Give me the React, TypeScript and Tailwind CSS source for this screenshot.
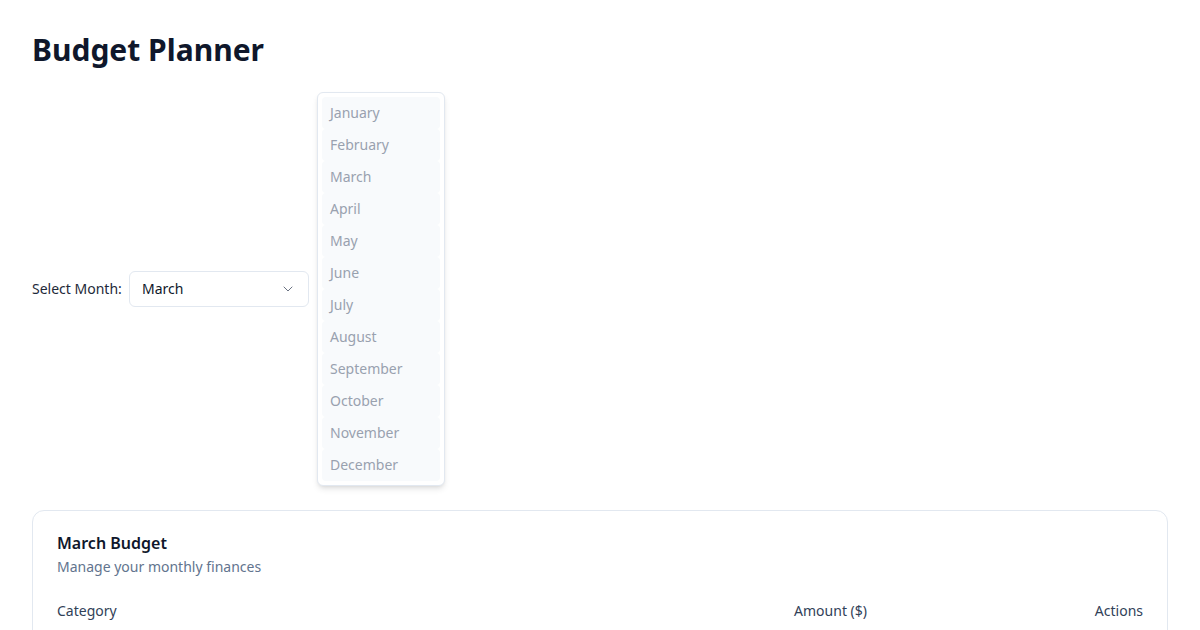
import { ChevronDown } from "lucide-react";

const MONTHS = [
  "January",
  "February",
  "March",
  "April",
  "May",
  "June",
  "July",
  "August",
  "September",
  "October",
  "November",
  "December",
];

export default function App() {
  const month = "March";

  return (
    <div
      className="min-h-screen bg-white p-8 text-slate-900"
      style={{ fontFamily: '"Noto Sans", "Open Sans", sans-serif' }}
    >
      <h1 className="mb-6 text-3xl font-bold leading-9 text-slate-900">Budget Planner</h1>

      {/* month picker — list is shown open beside the trigger */}
      <div className="flex items-center gap-2">
        <span className="w-[89px] shrink-0 whitespace-nowrap text-sm text-gray-800">Select Month:</span>
        <button
          type="button"
          className="flex h-9 w-[180px] items-center justify-between rounded-md border border-slate-200 bg-white px-3 text-sm text-slate-900"
        >
          {month}
          <ChevronDown size={16} strokeWidth={1.5} className="text-gray-500" />
        </button>
        <ul className="w-[128px] rounded-md border border-slate-200 bg-white p-1 shadow-md">
          {MONTHS.map((m) => (
            <li
              key={m}
              className="flex h-8 items-center rounded-sm bg-slate-50 px-2 text-sm text-gray-400"
            >
              {m}
            </li>
          ))}
        </ul>
      </div>

      <div className="mt-6 rounded-xl border border-slate-200 bg-white px-6 pt-5">
        <h2 className="text-base font-semibold leading-6 text-slate-900">{month} Budget</h2>
        <p className="mt-0.5 text-sm text-slate-500">Manage your monthly finances</p>

        <div className="mt-3.5 flex h-10 items-center border-b border-slate-200 text-sm text-slate-700">
          <div className="flex-1">Category</div>
          <div className="text-right">Amount ($)</div>
          <div className="w-[276px] text-right">Actions</div>
        </div>
        <div className="h-24" />
      </div>
    </div>
  );
}
